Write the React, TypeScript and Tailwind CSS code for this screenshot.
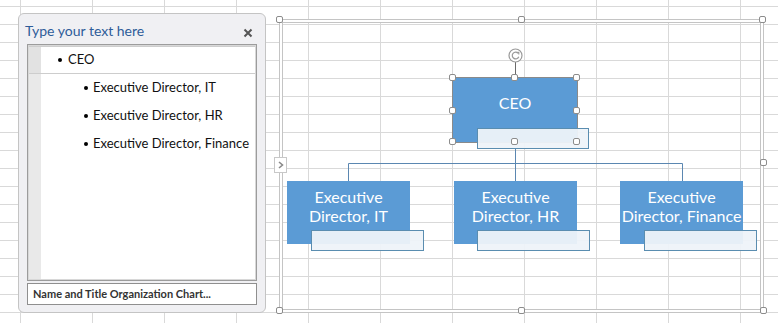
import React from 'react';

const listItems = [
  { label: 'CEO', level: 1, selected: true },
  { label: 'Executive Director, IT', level: 2 },
  { label: 'Executive Director, HR', level: 2 },
  { label: 'Executive Director, Finance', level: 2 },
];

const children = [
  { top: 'Executive', bottom: 'Director, IT', left: 7, subLeft: 31 },
  { top: 'Executive', bottom: 'Director, HR', left: 174, subLeft: 197 },
  { top: 'Executive', bottom: 'Director, Finance', left: 340, subLeft: 364 },
];

const Handle: React.FC<{ className: string }> = ({ className }) => (
  <div
    className={`absolute w-[7px] h-[7px] rounded-[2px] border border-[#8c8c8c] bg-white ${className}`}
  />
);

const TextPane: React.FC = () => (
  <div className="w-[248px] h-[300px] flex flex-col rounded-[6px] border border-[#c4c4c4] bg-[#f0f0f3] px-[8px] pb-[7px]">
    {/* Title row */}
    <div className="h-[30px] flex items-center justify-between">
      <span className="-ml-[2px] mt-[2px] text-[14px] text-[#2e5c99] font-['Segoe_UI',Lato,sans-serif]">
        Type your text here
      </span>
      <svg width="10" height="10" viewBox="0 0 10 10" className="mt-[8px] mr-[4px]">
        <path d="M1.5 1.5 L8.5 8.5 M8.5 1.5 L1.5 8.5" stroke="#555" strokeWidth="2" />
      </svg>
    </div>

    {/* Bullet list */}
    <div className="flex-1 border border-[#9c9c9c] bg-[#fff] p-[1px] shadow-[inset_0_0_0_1px_#d8d8d8]">
      <div className="h-full flex flex-col bg-[linear-gradient(to_right,#e9e9e9_12px,#ffffff_12px)] font-['Segoe_UI',Lato,sans-serif] text-[13px] text-[#111]">
        {listItems.map((item) =>
          item.selected ? (
            <div key={item.label} className="h-[28px] flex border-y border-[#cdcdcd] bg-[#e2e2e2]">
              <div className="w-[12px]" />
              <div className="flex-1 flex items-center bg-white pl-[17px]">
                <div className="w-[4px] h-[4px] rounded-full bg-black" />
                <span className="ml-[6px]">{item.label}</span>
              </div>
            </div>
          ) : (
            <div key={item.label} className="h-[28px] flex items-center pl-[55px]">
              <div className="w-[4px] h-[4px] rounded-full bg-black" />
              <span className="ml-[5px]">{item.label}</span>
            </div>
          )
        )}
      </div>
    </div>

    {/* Layout name */}
    <div className="mt-[2px] h-[22px] flex items-center border border-[#8f8f8f] bg-white pl-[5px] text-[11px] font-bold text-[#333] font-['Segoe_UI',Lato,sans-serif]">
      Name and Title Organization Chart...
    </div>
  </div>
);

const OrgChart: React.FC = () => (
  <div className="relative mt-[6px] w-[485px] h-[294px] border border-[#c4c4c4] shadow-[inset_0_0_0_2px_#ffffff,inset_0_0_0_3px_#c4c4c4] font-['Segoe_UI',Lato,sans-serif] text-white">
    {/* connectors */}
    <svg className="absolute left-0 top-0" width="483" height="292" viewBox="0 0 483 292">
      <path
        d="M235.5 129 V143.5 M68.5 161 V143.5 H402.5 V161 M235.5 143.5 V161"
        fill="none"
        stroke="#5b87b1"
        strokeWidth="1"
      />
    </svg>

    {/* frame handles */}
    <Handle className="left-[-4px] top-[-4px]" />
    <Handle className="left-[238px] top-[-4px]" />
    <Handle className="left-[479px] top-[-4px]" />
    <Handle className="left-[480px] top-[139px]" />
    <Handle className="left-[-4px] top-[287px]" />
    <Handle className="left-[238px] top-[287px]" />
    <Handle className="left-[480px] top-[287px]" />
    <div className="absolute left-[-6px] top-[137px] w-[13px] h-[16px] flex items-center justify-center border border-[#c8c8c8] bg-white">
      <svg width="6" height="8" viewBox="0 0 6 8">
        <path d="M1 1 L4.5 4 L1 7" fill="none" stroke="#8a8a8a" strokeWidth="1.6" />
      </svg>
    </div>

    {/* CEO */}
    <div className="absolute left-[173px] top-[58px] w-[124px] h-[64px] flex justify-center pt-[13px] bg-[#5b9bd5] outline outline-1 outline-[#8a8a8a] text-[16px]">
      CEO
    </div>
    <div className="absolute left-[197px] top-[108px] w-[112px] h-[21px] border border-[#5a8db0] bg-[#eef3f9]/95" />
    <div className="absolute left-[235px] top-[42px] w-px h-[16px] bg-[#6a6a6a]" />
    <svg className="absolute left-[228px] top-[28px]" width="15" height="15" viewBox="0 0 15 15">
      <circle cx="7.5" cy="7.5" r="6.5" fill="white" stroke="#9a9a9a" strokeWidth="1.2" />
      <path d="M10.2 5.2 A3.4 3.4 0 1 0 10.8 8.8" fill="none" stroke="#9a9a9a" strokeWidth="1.2" />
      <path d="M8.6 4.6 L10.8 4.4 L10.8 6.6" fill="none" stroke="#9a9a9a" strokeWidth="1.1" />
    </svg>
    <Handle className="left-[169px] top-[54px]" />
    <Handle className="left-[231px] top-[54px]" />
    <Handle className="left-[293px] top-[54px]" />
    <Handle className="left-[169px] top-[87px]" />
    <Handle className="left-[293px] top-[87px]" />
    <Handle className="left-[169px] top-[118px]" />
    <Handle className="left-[231px] top-[118px]" />
    <Handle className="left-[293px] top-[118px]" />

    {/* children */}
    {children.map((c) => (
      <React.Fragment key={c.bottom}>
        <div
          className="absolute top-[161px] w-[123px] h-[63px] flex flex-col items-center pt-[6px] bg-[#5b9bd5] text-[16px] leading-[19px]"
          style={{ left: c.left }}
        >
          <span>{c.top}</span>
          <span>{c.bottom}</span>
        </div>
        <div
          className="absolute top-[210px] w-[113px] h-[21px] border border-[#5a8db0] bg-[#eef3f9]/95"
          style={{ left: c.subLeft }}
        />
      </React.Fragment>
    ))}
  </div>
);

export default function App() {
  return (
    <div className="w-[778px] h-[323px] overflow-hidden bg-white bg-[linear-gradient(to_right,#d9d9d9_1px,transparent_1px),linear-gradient(to_bottom,#d9d9d9_1px,transparent_1px)] bg-[size:72px_18px] bg-[position:20px_6px]">
      <div className="flex items-start gap-[13px] pt-[13px] pl-[18px]">
        <TextPane />
        <OrgChart />
      </div>
    </div>
  );
}
